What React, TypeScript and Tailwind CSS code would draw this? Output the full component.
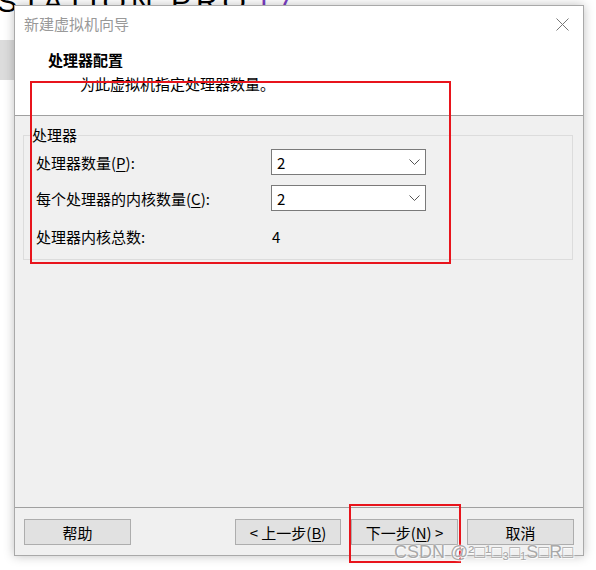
import React from "react";

const font = { fontFamily: '"Noto Sans CJK SC", "Noto Sans", sans-serif' };

function Chevron() {
  return (
    <svg width="11" height="6" viewBox="0 0 11 6" className="mr-[5px]">
      <path d="M0.5 0.5 L5.5 5.5 L10.5 0.5" fill="none" stroke="#555" strokeWidth="1" />
    </svg>
  );
}

function Combo({ value }: { value: string }) {
  return (
    <div className="flex h-[26px] w-[155px] items-center justify-between border border-[#7a7a7a] bg-white">
      <span className="pl-[5px] text-[15px] leading-none text-black">{value}</span>
      <Chevron />
    </div>
  );
}

function Btn({ children }: { children: React.ReactNode }) {
  return (
    <div className="flex h-[26px] w-[107px] items-center justify-center border border-[#adadad] bg-[#e1e1e1] text-[15px] leading-none text-black">
      {children}
    </div>
  );
}

export default function App() {
  return (
    <div className="relative h-[570px] w-[596px] overflow-hidden bg-white" style={font}>
      {/* background desktop */}
      <div
        className="absolute left-[-3px] top-[-13px] z-0 flex items-baseline whitespace-nowrap text-[30px] font-normal leading-none tracking-[5px] text-black"
        style={{ fontFamily: '"Liberation Sans", sans-serif' }}
      >
        <span>STATION PRO</span>
        <span className="ml-[4px] text-[#7b3fc4]">17</span>
      </div>
      <div className="absolute left-0 top-[40px] z-0 h-[40px] w-[14px] bg-[#dcdcdc]" />

      {/* dialog */}
      <div className="absolute left-[14px] top-[5px] z-10 flex h-[551px] w-[570px] flex-col border border-[#a9a9a9] bg-[#f0f0f0] shadow-[0_0_10px_rgba(0,0,0,0.25)]">
        <div className="relative h-[109px] bg-white">
          <div className="pl-[9px] pt-[8px] text-[15px] leading-[20px] text-[#999999]">新建虚拟机向导</div>
          <svg className="absolute right-[14px] top-[12px]" width="13" height="13" viewBox="0 0 13 13">
            <path d="M0.5 0.5 L12.5 12.5 M12.5 0.5 L0.5 12.5" stroke="#777" strokeWidth="1" />
          </svg>
          <div className="pl-[33px] pt-[16px] text-[15px] font-bold leading-[20px] text-black">处理器配置</div>
          <div className="pl-[65px] pt-[4px] text-[15px] leading-[20px] text-black">为此虚拟机指定处理器数量。</div>
        </div>
        <div className="h-px bg-[#a0a0a0]" />
        <div className="flex-1 pl-[8px] pr-[10px] pt-[19px]">
          <div className="relative h-[125px] border border-[#dcdcdc]">
            <div className="absolute left-[8px] top-[-11px] bg-[#f0f0f0] pr-[1px] text-[15px] leading-[20px] text-black">处理器</div>
            <div className="flex flex-col pl-[12px] pt-[13px] text-[15px] text-black">
              <div className="flex h-[26px] items-center">
                <span className="w-[235px] leading-none">
                  处理器数量(<span className="underline underline-offset-2">P</span>):
                </span>
                <Combo value="2" />
              </div>
              <div className="mt-[10px] flex h-[26px] items-center">
                <span className="w-[235px] leading-none">
                  每个处理器的内核数量(<span className="underline underline-offset-2">C</span>):
                </span>
                <Combo value="2" />
              </div>
              <div className="mt-[12px] flex h-[26px] items-center">
                <span className="w-[236px] leading-none">处理器内核总数:</span>
                <span className="leading-none">4</span>
              </div>
            </div>
          </div>
        </div>
        <div className="h-px bg-[#a0a0a0]" />
        <div className="flex h-[47px] items-start pl-[9px] pt-[11px]">
          <Btn>帮助</Btn>
          <div className="ml-[104px] flex">
            <div className="flex h-[26px] w-[106px] items-center justify-center border border-[#adadad] bg-[#e1e1e1] text-[15px] leading-none text-black">
              &lt; 上一步(<span className="underline underline-offset-2">B</span>)
            </div>
            <div className="ml-[10px]">
              <Btn>
                下一步(<span className="underline underline-offset-2">N</span>) &gt;
              </Btn>
            </div>
            <div className="ml-[9px]">
              <Btn>取消</Btn>
            </div>
          </div>
        </div>
      </div>

      {/* annotations */}
      <div className="pointer-events-none absolute left-[30px] top-[81px] z-20 h-[183px] w-[421px] border-2 border-[#e8141c]" />
      <div className="pointer-events-none absolute left-[349px] top-[504px] z-20 h-[59px] w-[112px] border-2 border-[#e8141c]" />
      <div
        className="absolute left-[394px] top-[540px] z-30 whitespace-nowrap text-[18px] leading-[24px] text-[#a8a8a8]"
        style={{ fontFamily: '"Liberation Sans", sans-serif', textShadow: "0 0 2px #fff, 1px 1px 1px #fff" }}
      >
        CSDN @²□¹□₃□₁S□R□
      </div>
    </div>
  );
}
